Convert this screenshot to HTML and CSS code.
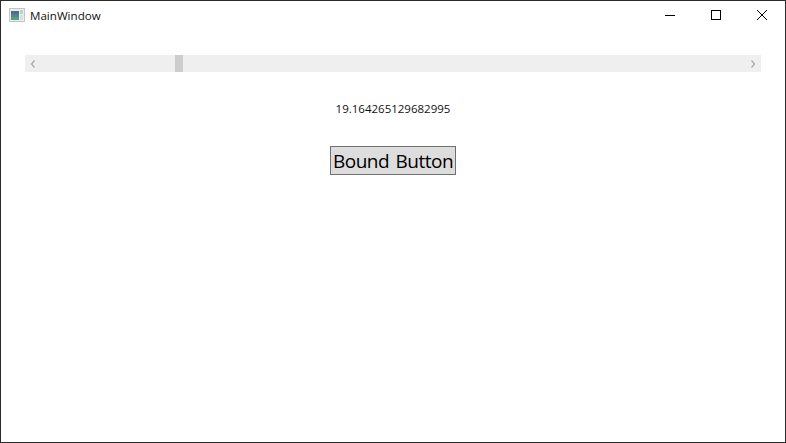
FILE: index.html
```html
<!DOCTYPE html>
<html lang="en">
<head>
    <meta charset="UTF-8">
    <meta name="viewport" content="width=device-width, initial-scale=1.0">
    <title>MainWindow</title>
    <link rel="stylesheet" href="styles.css">
</head>
<body>
    <div class="window">
        <div class="title-bar">
            <div class="title">
                <svg class="app-icon" width="16" height="14" viewBox="0 0 16 14">
                    <rect x="0.5" y="0.5" width="15" height="13" fill="#ededed" stroke="#c4c4c4"/>
                    <rect x="2" y="3" width="8" height="3" fill="#4f6f92"/>
                    <rect x="2" y="6" width="8" height="3" fill="#4a8a8c"/>
                    <rect x="2" y="9" width="8" height="3" fill="#5c9a82"/>
                    <rect x="11" y="2" width="3" height="4" fill="#b5d6c8"/>
                    <rect x="11" y="7" width="3" height="5" fill="#dedede"/>
                </svg>
                <span>MainWindow</span>
            </div>
            <div class="window-buttons">
                <button class="window-button">
                    <svg width="12" height="12" viewBox="0 0 12 12"><path d="M1 5.5H11" stroke="#000" fill="none"/></svg>
                </button>
                <button class="window-button">
                    <svg width="12" height="12" viewBox="0 0 12 12"><rect x="1.5" y="0.5" width="9" height="9" stroke="#000" fill="none"/></svg>
                </button>
                <button class="window-button">
                    <svg width="12" height="12" viewBox="0 0 12 12"><path d="M1 0L11 10M11 0L1 10" stroke="#000" fill="none"/></svg>
                </button>
            </div>
        </div>
        <div class="content">
            <div class="scrollbar">
                <svg class="arrow" width="6" height="8" viewBox="0 0 6 8"><path d="M4.5 0.5L1.5 4L4.5 7.5" stroke="#a6a6a6" stroke-width="1.2" fill="none"/></svg>
                <div class="track">
                    <div class="thumb"></div>
                </div>
                <svg class="arrow" width="6" height="8" viewBox="0 0 6 8"><path d="M1.5 0.5L4.5 4L1.5 7.5" stroke="#a6a6a6" stroke-width="1.2" fill="none"/></svg>
            </div>
            <p class="value">19.164265129682995</p>
            <button class="bound-button">Bound Button</button>
        </div>
    </div>
</body>
</html>
```

FILE: styles.css
```css
* {
    margin: 0;
    padding: 0;
    box-sizing: border-box;
}

html, body {
    height: 100%;
    overflow: hidden;
}

body {
    font-family: "Open Sans", "Noto Sans", sans-serif;
    background: #fff;
    color: #000;
}

.window {
    display: flex;
    flex-direction: column;
    height: 443px;
    border: 1px solid #2b2b2b;
}

.title-bar {
    display: flex;
    justify-content: space-between;
    align-items: center;
    height: 29px;
}

.title {
    display: flex;
    align-items: center;
    gap: 5px;
    padding-left: 8px;
    padding-bottom: 1px;
    font-size: 11.6px;
    color: #111;
}

.window-buttons {
    display: flex;
}

.window-button {
    display: flex;
    justify-content: center;
    align-items: center;
    width: 46px;
    height: 29px;
    background: none;
    border: none;
}

.content {
    display: flex;
    flex-direction: column;
    align-items: center;
    padding: 25px 24px 0;
}

.scrollbar {
    display: flex;
    align-items: center;
    align-self: stretch;
    height: 17px;
    padding: 0 5px;
    gap: 3px;
    background: #efefef;
}

.track {
    flex: 1;
    height: 100%;
}

.thumb {
    width: 8px;
    height: 100%;
    margin-left: 136px;
    background: #cdcdcd;
}

.value {
    margin-top: 28px;
    font-size: 11.5px;
    line-height: 17px;
    color: #111;
}

.bound-button {
    margin-top: 29px;
    width: 126px;
    height: 29px;
    font-family: "Open Sans", "Noto Sans", sans-serif;
    font-size: 19px;
    letter-spacing: -0.5px;
    word-spacing: 2px;
    line-height: 26px;
    white-space: nowrap;
    color: #000;
    background: #dddddd;
    border: 1px solid #707070;
}
```
